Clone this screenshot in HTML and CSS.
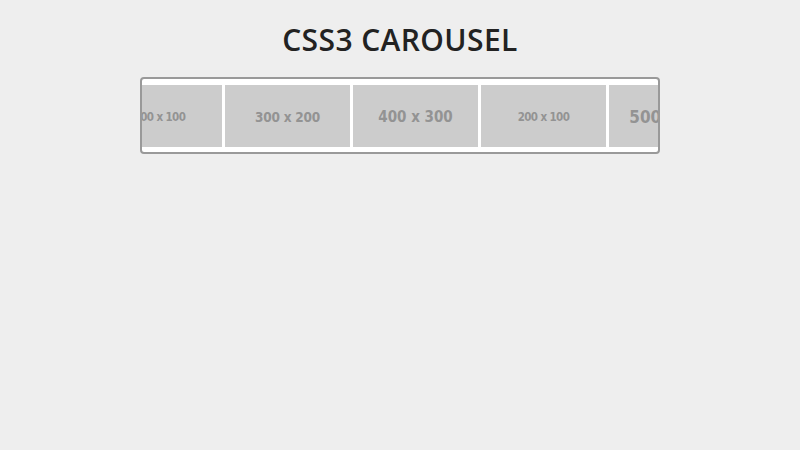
FILE: index.html
```html
<!DOCTYPE html>
<html lang="en">
<head>
    <meta charset="UTF-8">
    <meta name="viewport" content="width=device-width, initial-scale=1.0">
    <title>CSS3 Carousel</title>
    <link rel="stylesheet" href="styles.css">
</head>
<body>
    <h1>CSS3 Carousel</h1>

    <div class="carousel">
        <div class="track">
            <div class="slide"><span class="s-small">100 x 100</span></div>
            <div class="slide"><span class="s-mid">300 x 200</span></div>
            <div class="slide"><span class="s-large">400 x 300</span></div>
            <div class="slide"><span class="s-small">200 x 100</span></div>
            <div class="slide"><span class="s-xl">500 x 400</span></div>
        </div>
    </div>
</body>
</html>
```

FILE: styles.css
```css
body {
    font-family: "Open Sans", "DejaVu Sans", sans-serif;
    margin: 0;
    padding: 0;
    background-color: #eeeeee;
}
h1 {
    margin: 0;
    padding: 22px 0 19px;
    text-align: center;
    text-transform: uppercase;
    font-size: 30px;
    font-weight: 600;
    letter-spacing: 0.4px;
    line-height: 36px;
    color: #222;
}
.carousel {
    width: 516px;
    margin: 0 auto;
    padding: 6px 0 5px;
    background-color: #fff;
    border: 2px solid #999;
    border-radius: 4px;
    overflow: hidden;
}
.track {
    display: flex;
    gap: 3px;
    /* scrolled part-way through the strip */
    transform: translateX(-45px);
}
.slide {
    flex: 0 0 125px;
    height: 62px;
    display: flex;
    align-items: center;
    justify-content: center;
    padding-top: 2px;
    box-sizing: border-box;
    background-color: #cccccc;
    color: #939393;
    font-family: "DejaVu Sans Condensed", "DejaVu Sans", sans-serif;
    font-weight: bold;
    white-space: nowrap;
}
.s-small {
    font-size: 11.5px;
    letter-spacing: -0.6px;
}
.s-mid {
    font-size: 13.5px;
    letter-spacing: -0.2px;
}
.s-large {
    font-size: 15px;
}
.s-xl {
    font-size: 17px;
}
```
